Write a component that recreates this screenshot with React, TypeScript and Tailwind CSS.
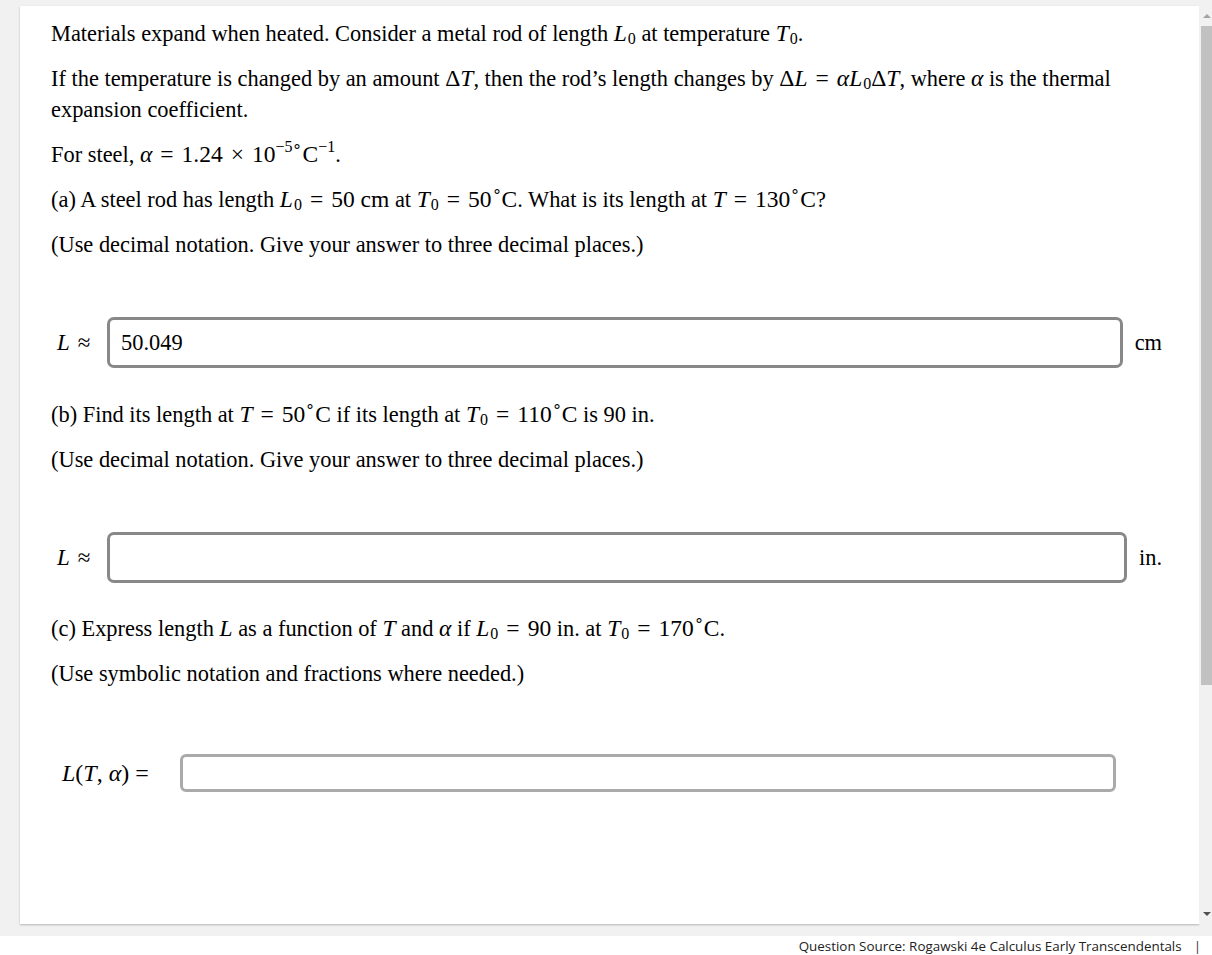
import React from 'react';

// math bits, KaTeX-ish look with Liberation Serif
const V = ({ children }: { children: React.ReactNode }) => (
  <span className="italic">{children}</span>
);

const Sub = ({ children }: { children: React.ReactNode }) => (
  <sub className="text-[16px] not-italic relative top-[3px] align-baseline leading-none ml-[1px]">{children}</sub>
);

const Sup = ({ children }: { children: React.ReactNode }) => (
  <sup className="text-[16px] not-italic relative -top-[10px] align-baseline leading-none">{children}</sup>
);

const Op = ({ children }: { children: React.ReactNode }) => (
  <span className="mx-[8px]">{children}</span>
);

const M = ({ children }: { children: React.ReactNode }) => (
  <span className="text-[23.5px] whitespace-nowrap">{children}</span>
);

const L0 = () => (
  <>
    <V>L</V>
    <Sub>0</Sub>
  </>
);

const T0 = () => (
  <>
    <V>T</V>
    <Sub>0</Sub>
  </>
);

const Deg = () => <Sup>∘</Sup>;

function AnswerRow({ value, unit }: { value?: string; unit: string }) {
  return (
    <div className="flex items-center pl-[6px] pr-[6px]">
      <div className="w-[40px] text-[23px] leading-none whitespace-nowrap">
        <V>L</V>
        <span className="ml-[8px]">≈</span>
      </div>
      <div className="flex-1 ml-[10px] h-[51px] border-[3px] border-[#888888] rounded-[7px] bg-white flex items-center px-[11px] text-[22.4px]">
        {value}
      </div>
      <div className="ml-[12px] text-[22.4px]">{unit}</div>
    </div>
  );
}

export default function App() {
  return (
    <div
      className="w-[1212px] h-[955px] bg-[#f1f1f1] flex flex-col overflow-hidden text-black"
      style={{ fontFamily: '"Liberation Serif", "Times New Roman", serif' }}
    >
      <div className="pt-[6px] pl-[20px] flex h-[924px]">
        <div className="w-[1179px] h-[918px] bg-white shadow-[0_1px_2px_rgba(0,0,0,0.25)] px-[31px] pt-[12px] text-[22.4px] leading-[31px]">
          <p className="mb-[14px]">
            Materials expand when heated. Consider a metal rod of length <M><L0 /></M> at temperature <M><T0 /></M>.
          </p>
          <p className="mb-[14px]">
            If the temperature is changed by an amount <M>Δ<V>T</V></M>, then the rod’s length changes by{' '}
            <M>
              Δ<V>L</V>
              <Op>=</Op>
              <V>α</V>
              <L0 />Δ<V>T</V>
            </M>
            , where <M><V>α</V></M> is the thermal expansion coefficient.
          </p>
          <p className="mb-[14px]">
            For steel,{' '}
            <M>
              <V>α</V>
              <Op>=</Op>1.24<Op>×</Op>10
              <Sup>−5∘</Sup>C<Sup>−1</Sup>
            </M>
            .
          </p>
          <p className="mb-[14px]">
            (a) A steel rod has length{' '}
            <M>
              <L0 />
              <Op>=</Op>50 cm
            </M>{' '}
            at{' '}
            <M>
              <T0 />
              <Op>=</Op>50
              <Deg />C
            </M>
            . What is its length at{' '}
            <M>
              <V>T</V>
              <Op>=</Op>130
              <Deg />C
            </M>
            ?
          </p>
          <p className="mb-[57px]">(Use decimal notation. Give your answer to three decimal places.)</p>

          <AnswerRow value="50.049" unit="cm" />

          <p className="mt-[31px] mb-[14px]">
            (b) Find its length at{' '}
            <M>
              <V>T</V>
              <Op>=</Op>50
              <Deg />C
            </M>{' '}
            if its length at{' '}
            <M>
              <T0 />
              <Op>=</Op>110
              <Deg />C
            </M>{' '}
            is 90 in.
          </p>
          <p className="mb-[57px]">(Use decimal notation. Give your answer to three decimal places.)</p>

          <AnswerRow unit="in." />

          <p className="mt-[30px] mb-[14px]">
            (c) Express length <M><V>L</V></M> as a function of <M><V>T</V></M> and <M><V>α</V></M> if{' '}
            <M>
              <L0 />
              <Op>=</Op>90
            </M>{' '}
            in. at{' '}
            <M>
              <T0 />
              <Op>=</Op>170
              <Deg />C
            </M>
            .
          </p>
          <p className="mb-[65px]">(Use symbolic notation and fractions where needed.)</p>

          <div className="flex items-center pl-[11px]">
            <div className="w-[94px] text-[24px] leading-none whitespace-nowrap">
              <V>L</V>(<V>T</V>, <V>α</V>)<span className="ml-[6px]">=</span>
            </div>
            <div className="ml-[24px] w-[936px] h-[38px] border-[3px] border-[#aaaaaa] rounded-[6px] bg-white" />
          </div>
        </div>

        {/* fake scrollbar */}
        <div className="w-[13px] h-[918px] bg-[#f1f1f1] flex flex-col items-end">
          <div className="h-[20px] w-[11px] flex items-center justify-center">
            <div className="w-0 h-0 border-l-[4px] border-r-[4px] border-b-[4px] border-l-transparent border-r-transparent border-b-[#a3a3a3]" />
          </div>
          <div className="w-[11px] h-[659px] bg-[#c1c1c1]" />
          <div className="flex-1" />
          <div className="h-[20px] w-[11px] flex items-center justify-center">
            <div className="w-0 h-0 border-l-[4px] border-r-[4px] border-t-[4px] border-l-transparent border-r-transparent border-t-[#505050]" />
          </div>
        </div>
      </div>

      <div className="mt-[12px] flex-1 bg-white flex items-center justify-end pr-[11px] text-[13.4px] text-[#222]"
        style={{ fontFamily: '"Open Sans", "Noto Sans", sans-serif' }}
      >
        <span>Question Source: Rogawski 4e Calculus Early Transcendentals</span>
        <span className="ml-[12px] text-[#333]">|</span>
      </div>
    </div>
  );
}
